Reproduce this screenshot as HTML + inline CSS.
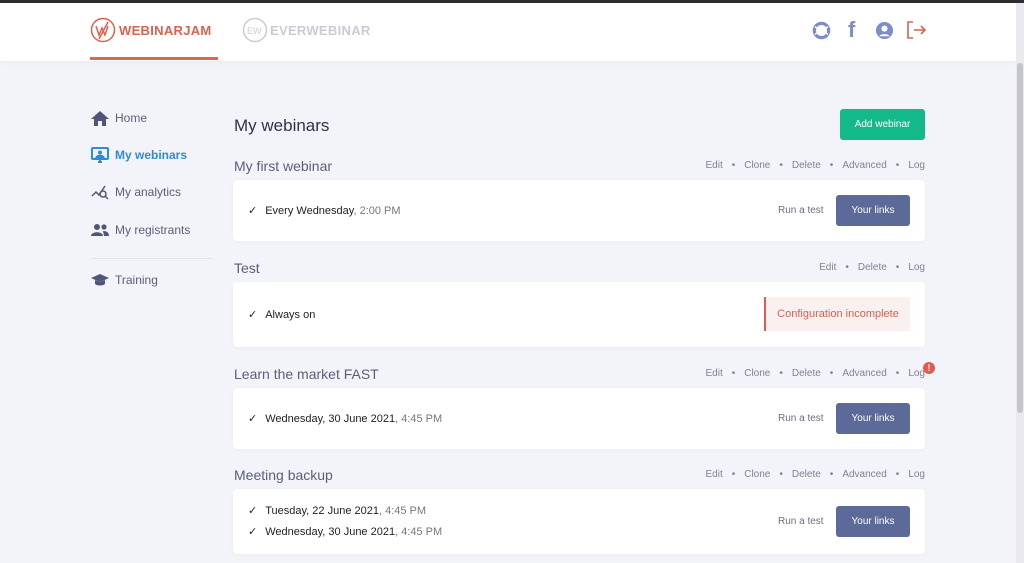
<!DOCTYPE html><html><head><style>
*{margin:0;padding:0;box-sizing:border-box}
body{width:1024px;height:563px;overflow:hidden;background:#f3f4f9;font-family:"Liberation Sans",sans-serif;position:relative;color:#3a3f55}
.top{position:absolute;left:0;top:0;width:1024px;height:3px;background:#2d2d2d}
.hdr{position:absolute;left:0;top:3px;width:1016px;height:58px;background:#fff;box-shadow:0 2px 6px rgba(0,0,0,.04)}
.sb{position:absolute;right:0;top:3px;width:8px;height:560px;background:#e9e9ee}
.sb i{position:absolute;left:1px;top:60px;width:6px;height:350px;background:#c4c5cc;border-radius:3px}
.a{position:absolute}
.nav{position:absolute;left:91px;font-size:12px;color:#5a607a;display:flex;align-items:center;gap:6px}
.t{position:absolute;left:234px;font-size:14px;color:#5a5f78}
.acts{position:absolute;right:99px;font-size:10px;color:#7d8297;display:flex;gap:9px}
.card{position:absolute;left:233px;width:692px;background:#fff;border-radius:4px;box-shadow:0 1px 4px rgba(0,0,0,.04)}
.ln{position:absolute;left:15px;font-size:11px;color:#222;display:flex;align-items:center;gap:8px}
.ln span{color:#777}
.run{position:absolute;left:545px;font-size:10px;color:#6a6f82}
.btn{position:absolute;left:603px;width:74px;height:31px;background:#5c6a99;color:#fff;font-size:10px;border-radius:3px;display:flex;align-items:center;justify-content:center}
</style></head><body>
<div class="top"></div><div class="hdr"></div><div class="sb"><i></i></div>
<svg class="a" style="left:90px;top:17px" width="26" height="26" viewBox="0 0 26 26"><circle cx="13" cy="13" r="11.5" fill="none" stroke="#d9614f" stroke-width="1.5"/><path d="M6 9l3 9 3-7 3 7 3-9M18 5L9 22" fill="none" stroke="#d9614f" stroke-width="1.5"/></svg>
<div class="a" style="left:119px;top:23px;font-size:13px;font-weight:bold;color:#d9614f;letter-spacing:.3px">WEBINARJAM</div>
<div class="a" style="left:90px;top:57px;width:128px;height:3px;background:#e06452"></div>
<svg class="a" style="left:242px;top:17px" width="26" height="26" viewBox="0 0 26 26"><circle cx="13" cy="13" r="11.5" fill="none" stroke="#c9ccd6" stroke-width="1.5"/><text x="5" y="17" font-size="9" fill="#c9ccd6" font-family="Liberation Sans">EW</text></svg>
<div class="a" style="left:270px;top:23px;font-size:13px;font-weight:bold;color:#c9ccd6;letter-spacing:.3px">EVERWEBINAR</div>
<svg class="a" style="left:812px;top:21px" width="19" height="19" viewBox="0 0 20 20"><circle cx="10" cy="10" r="7.5" fill="none" stroke="#7d8dc9" stroke-width="3.5"/><circle cx="10" cy="10" r="3" fill="none" stroke="#fff" stroke-width="1.5"/><path d="M3 6l4 2M17 6l-4 2M3 14l4-2M17 14l-4-2" stroke="#fff" stroke-width="1.5"/></svg>
<div class="a" style="left:848px;top:17px;font-size:22px;font-weight:bold;color:#7d8dc9">f</div>
<svg class="a" style="left:875px;top:21px" width="19" height="19" viewBox="0 0 20 20"><circle cx="10" cy="10" r="9" fill="#7d8dc9"/><circle cx="10" cy="8" r="3.2" fill="#fff"/><path d="M4.5 16c1.5-3 9.5-3 11 0" fill="#fff"/></svg>
<svg class="a" style="left:906px;top:20px" width="22" height="20" viewBox="0 0 22 20"><path d="M7 2H2v16h5" fill="none" stroke="#d9614f" stroke-width="1.6"/><path d="M8 10h11M15 6l4 4-4 4" fill="none" stroke="#d9614f" stroke-width="1.6"/></svg>

<div class="nav" style="top:110px"><svg width="18" height="16" viewBox="0 0 18 16"><path d="M9 1L0 9h3v7h4v-5h4v5h4V9h3z" fill="#4f5679"/></svg>Home</div>
<div class="nav" style="top:147px;color:#2e8bd6;font-weight:bold"><svg width="18" height="16" viewBox="0 0 18 16"><rect x="1" y="1" width="16" height="11" rx="1" fill="none" stroke="#2e8bd6" stroke-width="2"/><circle cx="9" cy="5.5" r="2" fill="#2e8bd6"/><path d="M5 11c1-3 7-3 8 0M7 15h4M9 12v3" stroke="#2e8bd6" stroke-width="2" fill="#2e8bd6"/></svg>My webinars</div>
<div class="nav" style="top:184px"><svg width="18" height="16" viewBox="0 0 18 16"><path d="M1 12l4-4 3 3 6-9" fill="none" stroke="#4f5679" stroke-width="1.5"/><circle cx="12" cy="10" r="3" fill="none" stroke="#4f5679" stroke-width="1.5"/><path d="M14 12l3 3" stroke="#4f5679" stroke-width="1.5"/></svg>My analytics</div>
<div class="nav" style="top:222px"><svg width="18" height="16" viewBox="0 0 18 16"><circle cx="6" cy="5" r="3" fill="#4f5679"/><circle cx="13" cy="5" r="2.6" fill="#4f5679"/><path d="M0 14c0-5 12-5 12 0zM12 9c3 0 6 1 6 5h-5z" fill="#4f5679"/></svg>My registrants</div>
<div class="a" style="left:91px;top:258px;width:122px;height:1px;background:#e2e4ec"></div>
<div class="nav" style="top:272px"><svg width="18" height="16" viewBox="0 0 18 16"><path d="M9 2L0 6l9 4 9-4z" fill="#4f5679"/><path d="M4 8v4c2 2 8 2 10 0V8l-5 2z" fill="#4f5679"/></svg>Training</div>

<div class="a" style="left:234px;top:116px;font-size:17px;color:#2f3347">My webinars</div>
<div class="a" style="left:840px;top:109px;width:85px;height:31px;background:#14b98a;border-radius:3px;color:#fff;font-size:10px;display:flex;align-items:center;justify-content:center">Add webinar</div>

<div class="t" style="top:158px">My first webinar</div>
<div class="acts" style="top:160px"><span>Edit</span>•<span>Clone</span>•<span>Delete</span>•<span>Advanced</span>•<span>Log</span></div>
<div class="card" style="top:180px;height:61px"><div class="ln" style="top:24px">✓<b style="font-weight:normal">Every Wednesday<span>, 2:00 PM</span></b></div><div class="run" style="top:25px">Run a test</div><div class="btn" style="top:15px">Your links</div></div>

<div class="t" style="top:260px">Test</div>
<div class="acts" style="top:262px"><span>Edit</span>•<span>Delete</span>•<span>Log</span></div>
<div class="card" style="top:282px;height:65px"><div class="ln" style="top:26px">✓<b style="font-weight:normal">Always on</b></div><div class="a" style="left:531px;top:15px;width:146px;height:34px;background:#fbf0f0;border-left:2px solid #d9614f;color:#d9614f;font-size:11px;display:flex;align-items:center;justify-content:center">Configuration incomplete</div></div>

<div class="t" style="top:366px">Learn the market FAST</div>
<div class="acts" style="top:368px"><span>Edit</span>•<span>Clone</span>•<span>Delete</span>•<span>Advanced</span>•<span>Log</span></div>
<div class="a" style="left:923px;top:362px;width:12px;height:12px;border-radius:50%;background:#e8574a;color:#fff;font-size:9px;font-weight:bold;text-align:center;line-height:12px">!</div>
<div class="card" style="top:388px;height:61px"><div class="ln" style="top:24px">✓<b style="font-weight:normal">Wednesday, 30 June 2021<span>, 4:45 PM</span></b></div><div class="run" style="top:25px">Run a test</div><div class="btn" style="top:15px">Your links</div></div>

<div class="t" style="top:467px">Meeting backup</div>
<div class="acts" style="top:469px"><span>Edit</span>•<span>Clone</span>•<span>Delete</span>•<span>Advanced</span>•<span>Log</span></div>
<div class="card" style="top:489px;height:65px"><div class="ln" style="top:15px">✓<b style="font-weight:normal">Tuesday, 22 June 2021<span>, 4:45 PM</span></b></div><div class="ln" style="top:36px">✓<b style="font-weight:normal">Wednesday, 30 June 2021<span>, 4:45 PM</span></b></div><div class="run" style="top:27px">Run a test</div><div class="btn" style="top:17px">Your links</div></div>
</body></html>
